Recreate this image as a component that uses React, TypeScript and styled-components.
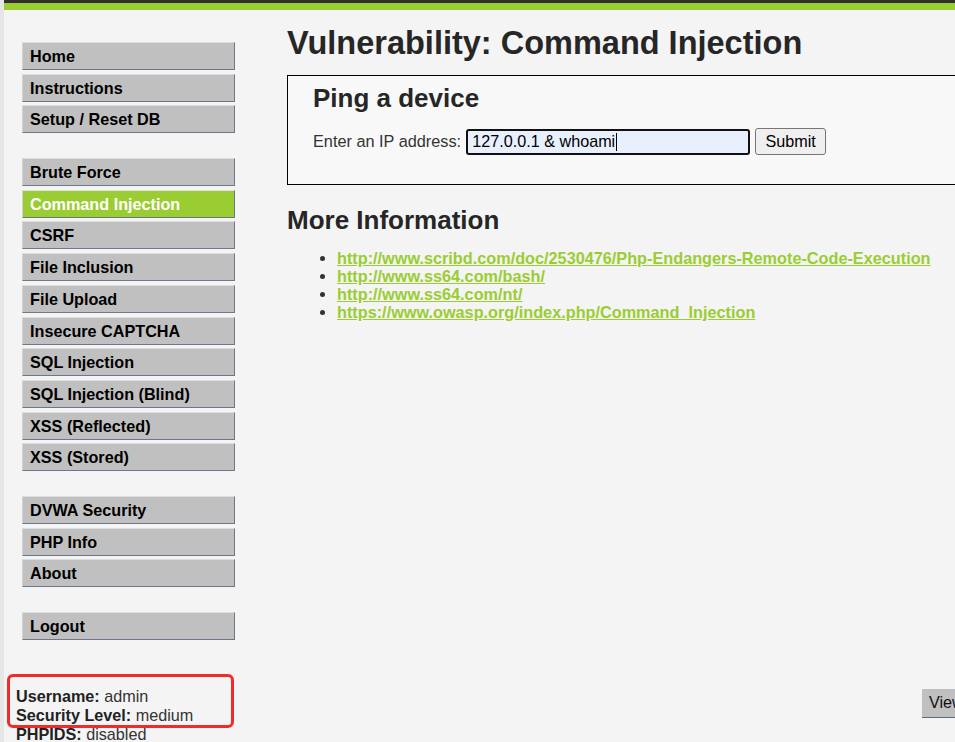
import React from "react";
import styled, { createGlobalStyle } from "styled-components";

const GlobalStyle = createGlobalStyle`
  html, body {
    margin: 0;
    padding: 0;
    background: #e6e6e6;
    overflow: hidden;
  }
  body {
    font-family: "Liberation Sans", Arial, Helvetica, sans-serif;
  }
`;

const Container = styled.div`
  margin-left: 4px;
  width: 1100px;
  min-height: 760px;
  background: #f4f4f4;
`;

const TopBar = styled.div`
  height: 3px;
  background: #2f2f2f;
`;

const GreenBar = styled.div`
  height: 7px;
  background: #9acd32;
`;

const Main = styled.div`
  display: flex;
  align-items: flex-start;
`;

const Sidebar = styled.nav`
  width: 283px;
  flex-shrink: 0;
  box-sizing: border-box;
  padding: 32px 0 0 12px;
  display: flex;
  flex-direction: column;
`;

const MenuGroups = styled.div`
  display: flex;
  flex-direction: column;
  gap: 24.7px;
  margin-left: 6px;
  width: 213px;
`;

const MenuGroup = styled.ul`
  list-style: none;
  margin: 0;
  padding: 0;
  display: flex;
  flex-direction: column;
  gap: 3.7px;
`;

const MenuLink = styled.a<{ $selected?: boolean }>`
  display: block;
  height: 28px;
  box-sizing: border-box;
  padding-left: 7px;
  line-height: 26px;
  font-size: 16.2px;
  font-weight: bold;
  text-decoration: none;
  white-space: nowrap;
  color: ${(p) => (p.$selected ? "#ffffff" : "#000000")};
  background: ${(p) => (p.$selected ? "#9acd32" : "#c0c0c0")};
  border-top: 1px solid #dedede;
  border-left: 1px solid #d2d2d2;
  border-right: 1px solid #6c778a;
  border-bottom: 1px solid #6c778a;
`;

const Info = styled.div`
  position: relative;
  margin-top: 47px;
  font-size: 16.2px;
  line-height: 19.2px;
  color: #333;
`;

const InfoLine = styled.div`
  white-space: nowrap;
`;

const InfoLabel = styled.b`
  color: #222;
`;

const Highlight = styled.div`
  position: absolute;
  left: -9px;
  top: -13px;
  width: 227px;
  height: 54px;
  box-sizing: border-box;
  border: 3px solid #f42a2a;
  border-radius: 6px;
  pointer-events: none;
`;

const Content = styled.main`
  flex: 1;
  padding-top: 15px;
  display: flex;
  flex-direction: column;
`;

const Title = styled.h1`
  margin: 0;
  font-size: 32.5px;
  line-height: 36px;
  font-weight: bold;
  color: #262626;
  white-space: nowrap;
`;

const CodeArea = styled.div`
  margin-top: 14px;
  border: 1px solid #000;
  background: #f8f8f8;
  padding: 7px 0 29px 25px;
`;

const SubTitle = styled.h3`
  margin: 0;
  font-size: 26px;
  line-height: 30px;
  font-weight: bold;
  color: #262626;
`;

const FormRow = styled.form`
  margin-top: 15px;
  display: flex;
  align-items: center;
`;

const Label = styled.label`
  font-size: 16.3px;
  color: #333;
  margin-right: 5px;
  white-space: nowrap;
`;

const Field = styled.div`
  width: 284px;
  height: 26px;
  box-sizing: border-box;
  border: 2px solid #111;
  border-radius: 3px;
  background: #e8f0fe;
  padding-left: 4px;
  display: flex;
  align-items: center;
  font-size: 16.2px;
  color: #000;
  margin-right: 5px;
  white-space: nowrap;
`;

const Caret = styled.span`
  display: inline-block;
  width: 1px;
  height: 18px;
  background: #000;
  margin-left: 1px;
`;

const SubmitButton = styled.button`
  height: 27px;
  width: 71px;
  padding: 0;
  background: #efefef;
  border: 1px solid #767676;
  border-radius: 3px;
  font-family: inherit;
  font-size: 16.2px;
  color: #000;
`;

const SectionTitle = styled.h2`
  margin: 19.6px 0 0;
  font-size: 26px;
  line-height: 30px;
  font-weight: bold;
  color: #262626;
`;

const LinkList = styled.ul`
  margin: 14.4px 0 0;
  padding-left: 50px;
  font-size: 16.25px;
  line-height: 18px;
  font-weight: bold;
  color: #333;
`;

const ExtLink = styled.a`
  color: #9acd32;
  text-decoration: underline;
  white-space: nowrap;
`;

const ButtonRow = styled.div`
  margin-top: 368px;
  padding-left: 635px;
  display: flex;
  gap: 5px;
`;

const PopupButton = styled.button`
  height: 29px;
  padding: 0 7px;
  background: #c0c0c0;
  border: none;
  border-bottom: 1px solid #5e6b80;
  font-family: inherit;
  font-size: 16.2px;
  color: #111;
  white-space: nowrap;
`;

const groups: { label: string; selected?: boolean }[][] = [
  [{ label: "Home" }, { label: "Instructions" }, { label: "Setup / Reset DB" }],
  [
    { label: "Brute Force" },
    { label: "Command Injection", selected: true },
    { label: "CSRF" },
    { label: "File Inclusion" },
    { label: "File Upload" },
    { label: "Insecure CAPTCHA" },
    { label: "SQL Injection" },
    { label: "SQL Injection (Blind)" },
    { label: "XSS (Reflected)" },
    { label: "XSS (Stored)" },
  ],
  [{ label: "DVWA Security" }, { label: "PHP Info" }, { label: "About" }],
  [{ label: "Logout" }],
];

const links = [
  "http://www.scribd.com/doc/2530476/Php-Endangers-Remote-Code-Execution",
  "http://www.ss64.com/bash/",
  "http://www.ss64.com/nt/",
  "https://www.owasp.org/index.php/Command_Injection",
];

export default function App() {
  return (
    <>
      <GlobalStyle />
      <Container>
        <TopBar />
        <GreenBar />
        <Main>
          <Sidebar>
            <MenuGroups>
              {groups.map((g, i) => (
                <MenuGroup key={i}>
                  {g.map((item) => (
                    <li key={item.label}>
                      <MenuLink href="#" $selected={item.selected}>
                        {item.label}
                      </MenuLink>
                    </li>
                  ))}
                </MenuGroup>
              ))}
            </MenuGroups>
            <Info>
              <Highlight />
              <InfoLine>
                <InfoLabel>Username:</InfoLabel> admin
              </InfoLine>
              <InfoLine>
                <InfoLabel>Security Level:</InfoLabel> medium
              </InfoLine>
              <InfoLine>
                <InfoLabel>PHPIDS:</InfoLabel> disabled
              </InfoLine>
            </Info>
          </Sidebar>
          <Content>
            <Title>Vulnerability: Command Injection</Title>
            <CodeArea>
              <SubTitle>Ping a device</SubTitle>
              <FormRow onSubmit={(e) => e.preventDefault()}>
                <Label>Enter an IP address:</Label>
                <Field>
                  127.0.0.1 &amp; whoami
                  <Caret />
                </Field>
                <SubmitButton type="submit">Submit</SubmitButton>
              </FormRow>
            </CodeArea>
            <SectionTitle>More Information</SectionTitle>
            <LinkList>
              {links.map((l) => (
                <li key={l}>
                  <ExtLink href="#">{l}</ExtLink>
                </li>
              ))}
            </LinkList>
            <ButtonRow>
              <PopupButton type="button">View Source</PopupButton>
              <PopupButton type="button">View Help</PopupButton>
            </ButtonRow>
          </Content>
        </Main>
      </Container>
    </>
  );
}
